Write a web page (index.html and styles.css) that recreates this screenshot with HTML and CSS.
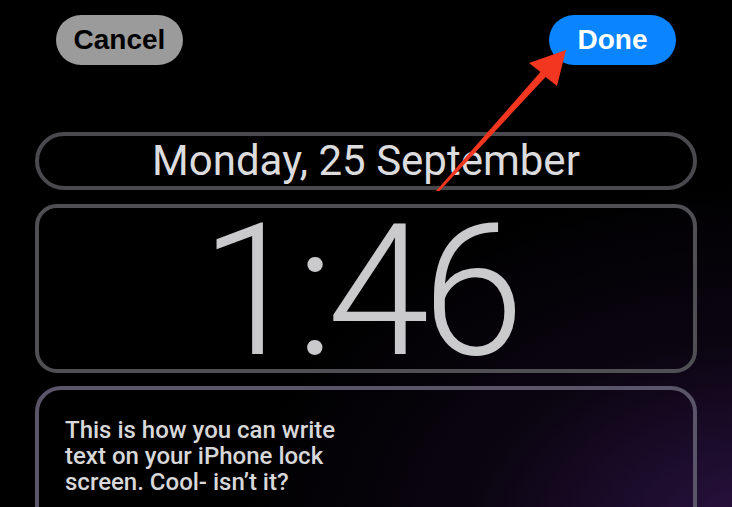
FILE: index.html
```html
<!DOCTYPE html>
<html lang="en">
<head>
<meta charset="UTF-8" />
<title>Lock Screen Editor</title>
<link rel="stylesheet" href="styles.css">
</head>
<body>
  <div class="screen">
    <div class="topbar">
      <button class="btn btn-cancel">Cancel</button>
      <button class="btn btn-done">Done</button>
    </div>

    <div class="widget date-box">
      <span class="date">Monday, 25 September</span>
    </div>

    <div class="widget time-box">
      <span class="time">1:46</span>
    </div>

    <div class="widget note-box">
      <p class="note">This is how you can write<br>text on your iPhone lock<br>screen. Cool- isn’t it?</p>
    </div>

    <!-- annotation arrow pointing at Done -->
    <svg class="arrow" width="732" height="507" viewBox="0 0 732 507">
      <polygon points="436,191 439.5,191 545.6,76.9 557,86 566,50 529,63 540.4,72.1" fill="#f2361f" />
    </svg>
  </div>
</body>
</html>
```

FILE: styles.css
```css
* {
  box-sizing: border-box;
}
html, body {
  margin: 0;
  padding: 0;
  width: 732px;
  height: 507px;
  overflow: hidden;
  background: #000;
}
.screen {
  position: relative;
  width: 732px;
  height: 507px;
  overflow: hidden;
  background:
    radial-gradient(ellipse 520px 360px at 760px 540px, rgba(56, 24, 86, 0.8), rgba(28, 12, 44, 0.4) 55%, rgba(0, 0, 0, 0) 100%),
    #000;
  font-family: Roboto, "Liberation Sans", sans-serif;
  padding: 15px 35px 0 35px;
}
.topbar {
  display: flex;
  justify-content: space-between;
  padding: 0 21px;
}
.btn {
  width: 127px;
  height: 50px;
  border: none;
  border-radius: 25px;
  font-family: "Liberation Sans", Arial, sans-serif;
  font-weight: 700;
  font-size: 28px;
  padding: 0;
}
.btn-cancel {
  background: #9b9b9b;
  color: #000;
}
.btn-done {
  background: #0a84ff;
  color: #fff;
}
.widget {
  width: 662px;
  border: 4px solid #4a4a4e;
  display: flex;
}
.date-box {
  margin-top: 67px;
  height: 58px;
  border-radius: 29px;
  justify-content: center;
  align-items: center;
}
.date {
  color: #dcdcde;
  font-size: 42px;
  line-height: 1;
}
.time-box {
  margin-top: 14px;
  height: 169px;
  border-radius: 22px;
  justify-content: center;
  align-items: center;
  border-color: #505054;
}
.time {
  color: #cacacd;
  font-size: 184px;
  font-weight: 300;
  line-height: 1;
  letter-spacing: -7px;
  margin: 4px 14px 0 0;
}
.note-box {
  margin-top: 13px;
  height: 160px;
  border-radius: 26px;
  border-color: #5b5569;
  padding: 27px 0 0 26px;
}
.note {
  margin: 0;
  color: #d8d8da;
  font-size: 24px;
  font-weight: 500;
  line-height: 26px;
}
.arrow {
  position: absolute;
  left: 0;
  top: 0;
  pointer-events: none;
}
```
